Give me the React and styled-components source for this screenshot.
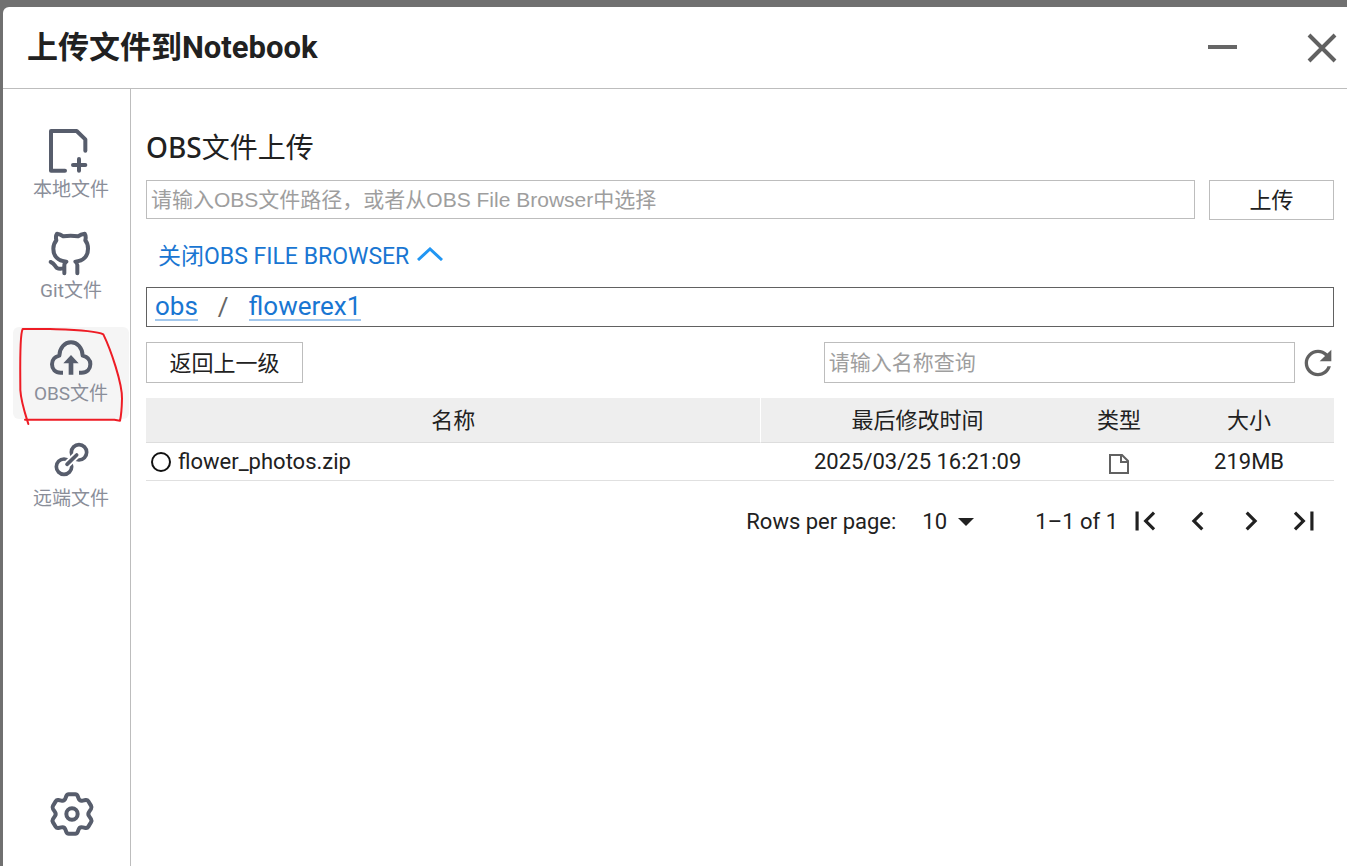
import React, { useState } from 'react';
import styled, { createGlobalStyle } from 'styled-components';

const GlobalStyle = createGlobalStyle`
  * {
    box-sizing: border-box;
  }
  body {
    margin: 0;
    background: #707070;
    color: #212121;
    font-family: Roboto, "Noto Sans CJK SC", sans-serif;
    font-size: 22px;
  }
  button, input, select {
    font-family: inherit;
    color: inherit;
  }
`;

const Backdrop = styled.div`
  display: flex;
  min-height: 100vh;
  padding: 7px 0 0 3px;
  background: #707070;
`;

const Dialog = styled.section`
  flex: 1;
  display: flex;
  flex-direction: column;
  background: #fff;
  border-radius: 6px 0 0 0;
`;

const Header = styled.header`
  display: flex;
  align-items: center;
  justify-content: space-between;
  height: 82px;
  padding: 0 9px 0 24px;
  border-bottom: 1px solid #bdbdbd;
`;

const Title = styled.h1`
  margin: 0;
  font-size: 31px;
  line-height: 40px;
  font-weight: 700;
`;

const WindowButtons = styled.div`
  display: flex;
  gap: 67px;
`;

const IconButton = styled.button`
  display: flex;
  align-items: center;
  justify-content: center;
  width: ${props => props.$width || 32}px;
  height: 40px;
  padding: 0;
  border: 0;
  background: none;
  color: ${props => props.$color || '#212121'};
  cursor: pointer;
  svg {
    flex: none;
  }
`;

const Body = styled.div`
  flex: 1;
  display: flex;
`;

const Sidebar = styled.nav`
  display: flex;
  flex-direction: column;
  justify-content: space-between;
  width: 128px;
  padding: 32px 1px 28px 10px;
  border-right: 1px solid #bdbdbd;
`;

const SidebarGroup = styled.div`
  display: flex;
  flex-direction: column;
  gap: 11px;
`;

const SidebarItem = styled.button`
  position: relative;
  display: flex;
  flex-direction: column;
  align-items: center;
  height: ${props => props.$small ? 48 : 92}px;
  padding: ${props => props.$small ? 0 : '5px 0 0'};
  border: 0;
  border-radius: 6px;
  background: ${props => props.$active ? '#f5f5f5' : 'none'};
  color: #575d6c;
  cursor: pointer;
`;

const SidebarLabel = styled.span`
  font-size: 19px;
  line-height: 28px;
  font-family: ${props => props.$latin ? 'Roboto, ' : ''}"Noto Sans CJK SC", sans-serif;
  color: #8a8e99;
`;

const Scribble = styled.svg`
  position: absolute;
  top: 0;
  left: 0;
  pointer-events: none;
`;

const Content = styled.main`
  flex: 1;
  min-width: 0;
  padding: 38px 13px 16px 15px;
`;

const SectionTitle = styled.h2`
  margin: 0 0 13px;
  font-family: "Noto Sans", "Noto Sans CJK SC", sans-serif;
  font-size: 28px;
  line-height: 40px;
  font-weight: 400;
`;

const Latin = styled.span`
  font-weight: 500;
`;

const Row = styled.div`
  display: flex;
  justify-content: space-between;
  align-items: ${props => props.$align || 'center'};
`;

const TextInput = styled.input`
  flex: ${props => props.$width ? 'none' : 1};
  width: ${props => props.$width || 'auto'};
  min-width: 0;
  height: ${props => props.$height}px;
  padding: 0 4px;
  border: 1px solid #bdbdbd;
  background: #fff;
  font-family: "Liberation Sans", "Noto Sans CJK SC", sans-serif;
  font-size: 21px;
  outline: 0;
  &::placeholder {
    color: #9e9e9e;
    opacity: 1;
  }
`;

const BorderButton = styled.button`
  width: ${props => props.$width}px;
  height: ${props => props.$height}px;
  padding: 0 0 4px;
  border: 1px solid #bdbdbd;
  background: #fff;
  font-size: 22px;
  cursor: pointer;
`;

const UploadRow = styled(Row)`
  gap: 14px;
`;

const BrowserToggle = styled.button`
  display: flex;
  align-items: center;
  gap: 8px;
  height: 40px;
  margin: 14px 0 13px;
  padding: 0 12px;
  border: 0;
  background: none;
  color: #1976d2;
  font-size: 23px;
  text-transform: uppercase;
  cursor: pointer;
`;

const Breadcrumb = styled.nav`
  display: flex;
  align-items: center;
  gap: 20px;
  height: 40px;
  margin-bottom: 15px;
  padding: 0 8px;
  border: 1px solid #616161;
  font-size: 26px;
  color: #666;
`;

const Crumb = styled.a`
  line-height: 26px;
  color: #1976d2;
  text-decoration: none;
  border-bottom: 2px solid #a3c8ed;
`;

const SearchGroup = styled.div`
  flex: 1;
  display: flex;
  align-items: center;
  justify-content: flex-end;
  gap: 7px;
`;

const Table = styled.table`
  width: 100%;
  margin-top: 15px;
  border-collapse: separate;
  border-spacing: 0;
  table-layout: fixed;
`;

const HeadCell = styled.th`
  width: ${props => props.$width};
  height: 45px;
  padding: 0 0 4px;
  background: #eee;
  border-bottom: 1px solid #ddd;
  border-right: ${props => props.$divider ? '1px solid #fff' : '0'};
  font-weight: 400;
`;

const Cell = styled.td`
  height: 38px;
  padding: 0;
  border-bottom: 1px solid #e0e0e0;
  text-align: center;
`;

const FileLabel = styled.label`
  display: flex;
  align-items: center;
  gap: 7px;
  padding-left: 5px;
`;

const Radio = styled.input`
  appearance: none;
  width: 20px;
  height: 20px;
  margin: 0;
  border: 2px solid #111;
  border-radius: 50%;
  &:checked {
    background: radial-gradient(#111 45%, #fff 50%);
  }
`;

const FileIcon = styled.svg`
  display: block;
  margin: 4px auto 0;
`;

const Pagination = styled.div`
  display: flex;
  align-items: center;
  justify-content: flex-end;
  margin-top: 20px;
  padding-right: 4px;
`;

const SelectWrapper = styled.div`
  position: relative;
  margin: 0 61px 0 26px;
`;

const RowsSelect = styled.select`
  appearance: none;
  display: block;
  width: 52px;
  padding: 0;
  border: 0;
  background: none;
  font-size: 22px;
`;

const SelectArrow = styled.svg`
  position: absolute;
  right: 0;
  top: 50%;
  margin-top: -3px;
  pointer-events: none;
`;

const strokeProps = { fill: 'none', stroke: 'currentColor', strokeLinecap: 'round', strokeLinejoin: 'round' };

const LocalIcon = () => (
  <svg width="48" height="48" viewBox="141 48 144 144" {...strokeProps} strokeWidth="12">
    <path d="M195 182H153V63H230L256 88V122M219 165H256M237 147V182" />
  </svg>
);

const GitIcon = () => (
  <svg width="48" height="48" viewBox="141 357 144 144" {...strokeProps} strokeWidth="12">
    <path d="M193 490V466Q193 458 199 455C173 453 160 438 160 416C160 406 163 398 169 391Q166 378 171 371Q181 372 190 379Q212 376 234 379Q243 372 254 371Q259 379 256 391C262 398 264 406 264 416C264 438 251 453 226 455Q232 459 232 466V490" />
    <path d="M152 456C164 460 164 469 171 474Q178 478 190 475" />
  </svg>
);

const CloudIcon = () => (
  <svg width="48" height="48" viewBox="141 66 144 144" {...strokeProps} strokeWidth="12">
    <path strokeLinecap="butt" d="M189 188H182C166 188 156 177 156 163C156 149 165 140 178 137C179 113 194 97 213 97C232 97 247 113 248 137C261 140 271 149 271 163C271 177 261 188 245 188H237" />
    <path fill="currentColor" stroke="none" d="M213 135L236 160H220V194H206V160H190Z" />
  </svg>
);

const LinkIcon = () => (
  <svg width="48" height="48" viewBox="141 375 144 144" {...strokeProps} strokeWidth="11">
    <circle cx="237" cy="427" r="23" />
    <circle cx="192" cy="470" r="23" />
    <path stroke="#fff" strokeWidth="22" strokeLinecap="butt" d="M200 464L230 435" />
    <path d="M201 463L230 435" />
  </svg>
);

const GearIcon = () => (
  <svg width="48" height="48" viewBox="-75 -72 144 144" {...strokeProps} strokeWidth="12">
    <path d="M-10-59H10Q15-59 17-54L20-46Q23-38 32-40L41-42Q46-43 49-38L57-25Q60-20 57-15L51-6Q47 0 51 6L57 15Q60 20 57 25L49 38Q46 43 41 42L32 40Q23 38 20 46L17 54Q15 59 10 59H-10Q-15 59-17 54L-20 46Q-23 38-32 40L-41 42Q-46 43-49 38L-57 25Q-60 20-57 15L-51 6Q-47 0-51-6L-57-15Q-60-20-57-25L-49-38Q-46-43-41-42L-32-40Q-23-38-20-46L-17-54Q-15-59-10-59Z" />
    <circle r="17" />
  </svg>
);

const MaterialIcon = ({ d, size = 38 }) => (
  <svg width={size} height={size} viewBox="0 0 24 24" fill="currentColor"><path d={d} /></svg>
);

const sources = [
  { id: 'local', label: '本地文件', icon: <LocalIcon /> },
  { id: 'git', label: 'Git文件', icon: <GitIcon />, latin: true },
  { id: 'obs', label: 'OBS文件', icon: <CloudIcon />, latin: true },
  { id: 'remote', label: '远端文件', icon: <LinkIcon /> },
];

const files = [
  { name: 'flower_photos.zip', modified: '2025/03/25 16:21:09', size: '219MB' },
];

const pageButtons = [
  { label: 'First page', d: 'M18.41 16.59L13.82 12l4.59-4.59L17 6l-6 6 6 6zM6 6h2v12H6z' },
  { label: 'Previous page', d: 'M15.41 7.41L14 6l-6 6 6 6 1.41-1.41L10.83 12z' },
  { label: 'Next page', d: 'M10 6L8.59 7.41 13.17 12l-4.58 4.59L10 18l6-6z' },
  { label: 'Last page', d: 'M5.59 7.41L10.18 12l-4.59 4.59L7 18l6-6-6-6zM16 6h2v12h-2z' },
];

const SourceList = () => (
  <Sidebar>
    <SidebarGroup>
      {sources.map(source => (
        <SidebarItem key={source.id} $active={source.id === 'obs'}>
          {source.icon}
          <SidebarLabel $latin={source.latin}>{source.label}</SidebarLabel>
          {source.id === 'obs' && (
            <Scribble width="116" height="100" viewBox="39 51 348 300" fill="none" stroke="#ee1c25" strokeWidth="6" strokeLinecap="round" strokeLinejoin="round">
              <path d="M85 342C75 310 63 275 61 240C61 180 58 75 68 57H150C210 59 285 60 310 73C332 118 367 220 366 266Q365 310 360 332L343 329H75" />
            </Scribble>
          )}
        </SidebarItem>
      ))}
    </SidebarGroup>
    <SidebarItem $small aria-label="设置"><GearIcon /></SidebarItem>
  </Sidebar>
);

const FileTable = () => {
  const [selected, setSelected] = useState('');

  return (
    <Table>
      <thead>
        <tr>
          <HeadCell $width="51.8%" $divider>名称</HeadCell>
          <HeadCell $width="26.3%">最后修改时间</HeadCell>
          <HeadCell $width="7.6%">类型</HeadCell>
          <HeadCell $width="14.3%">大小</HeadCell>
        </tr>
      </thead>
      <tbody>
        {files.map(file => (
          <tr key={file.name}>
            <Cell>
              <FileLabel>
                <Radio type="radio" name="file" checked={selected === file.name} onChange={() => setSelected(file.name)} />
                {file.name}
              </FileLabel>
            </Cell>
            <Cell>{file.modified}</Cell>
            <Cell>
              <FileIcon width="20" height="20" viewBox="0 0 20 20" fill="none" stroke="#616161" strokeWidth="2">
                <path d="M1 1H13L19 7V19H1ZM12 1V8H19" />
              </FileIcon>
            </Cell>
            <Cell>{file.size}</Cell>
          </tr>
        ))}
      </tbody>
    </Table>
  );
};

const App = () => (
  <>
    <GlobalStyle />
    <Backdrop>
      <Dialog>
        <Header>
          <Title>上传文件到Notebook</Title>
          <WindowButtons>
            <IconButton $color="#666" aria-label="最小化">
              <svg width="30" height="30" viewBox="0 0 30 30" stroke="currentColor" strokeWidth="4"><path d="M0 14H29" /></svg>
            </IconButton>
            <IconButton $color="#616161" aria-label="关闭">
              <svg width="30" height="30" viewBox="0 0 30 30" stroke="currentColor" strokeWidth="4"><path d="M2 2L28 28M28 2L2 28" /></svg>
            </IconButton>
          </WindowButtons>
        </Header>
        <Body>
          <SourceList />
          <Content>
            <SectionTitle><Latin>OBS</Latin>文件上传</SectionTitle>
            <UploadRow $align="flex-start">
              <TextInput
                $height={39}
                aria-label="OBS文件路径"
                placeholder="请输入OBS文件路径，或者从OBS File Browser中选择"
              />
              <BorderButton $width={125} $height={40}>上传</BorderButton>
            </UploadRow>
            <BrowserToggle>
              关闭OBS File Browser
              <svg width="26" height="14" viewBox="0 0 26 14" fill="none" stroke="#2196f3" strokeWidth="3"><path d="M1 13L13 2L25 13" /></svg>
            </BrowserToggle>
            <Breadcrumb>
              <Crumb href="#obs">obs</Crumb>
              <span>/</span>
              <Crumb href="#flowerex1">flowerex1</Crumb>
            </Breadcrumb>
            <Row>
              <BorderButton $width={157} $height={41}>返回上一级</BorderButton>
              <SearchGroup>
                <TextInput $width="45.7%" $height={41} aria-label="名称查询" placeholder="请输入名称查询" />
                <IconButton $color="#616161" aria-label="刷新">
                  <MaterialIcon size={40} d="M17.65 6.35C16.2 4.9 14.21 4 12 4c-4.42 0-7.99 3.58-7.99 8s3.57 8 7.99 8c3.73 0 6.84-2.55 7.73-6h-2.08c-.82 2.33-3.04 4-5.65 4-3.31 0-6-2.69-6-6s2.69-6 6-6c1.66 0 3.14.69 4.22 1.78L13 11h7V4l-2.35 2.35z" />
                </IconButton>
              </SearchGroup>
            </Row>
            <FileTable />
            <Pagination>
              <label htmlFor="rows">Rows per page:</label>
              <SelectWrapper>
                <RowsSelect id="rows" defaultValue="10">
                  <option>10</option>
                  <option>20</option>
                  <option>50</option>
                </RowsSelect>
                <SelectArrow width="16" height="8" viewBox="0 0 16 8"><path d="M0 0H16L8 8Z" fill="#212121" /></SelectArrow>
              </SelectWrapper>
              <span>1–1 of 1</span>
              {pageButtons.map(button => (
                <IconButton key={button.label} $width={53} aria-label={button.label}>
                  <MaterialIcon d={button.d} />
                </IconButton>
              ))}
            </Pagination>
          </Content>
        </Body>
      </Dialog>
    </Backdrop>
  </>
);

export default App;
